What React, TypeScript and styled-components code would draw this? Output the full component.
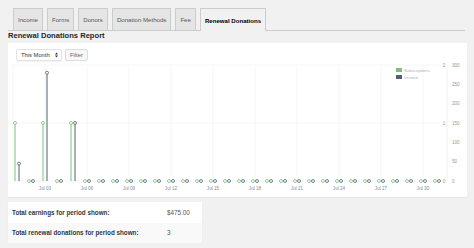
import React from 'react';
import styled, { createGlobalStyle } from 'styled-components';

const GlobalStyle = createGlobalStyle`
  body {
    margin: 0;
    background: #f1f1f1;
    font-family: "Liberation Sans", Arial, sans-serif;
    color: #32373c;
  }
`;

const Page = styled.div`
  padding: 8px 7px 0 8px;
`;

const TabNav = styled.nav`
  display: flex;
  align-items: flex-end;
  gap: 4px;
  height: 22px;
  padding-left: 5px;
  margin-right: 2px;
  border-bottom: 1px solid #ccc;
`;

const Tab = styled.a<{ $active?: boolean }>`
  display: flex;
  align-items: center;
  box-sizing: border-box;
  height: ${(p) => (p.$active ? '23px' : '22px')};
  margin-bottom: ${(p) => (p.$active ? '-1px' : '0')};
  padding: 0 4px;
  border: 1px solid #ccc;
  border-bottom: none;
  background: ${(p) => (p.$active ? '#f1f1f1' : '#e5e5e5')};
  color: ${(p) => (p.$active ? '#000' : '#555')};
  font-size: 6.1px;
  font-weight: ${(p) => (p.$active ? 700 : 400)};
  white-space: nowrap;
`;

const Heading = styled.h2`
  margin: 0;
  height: 12px;
  line-height: 9px;
  font-size: 7.6px;
  font-weight: 700;
  color: #23282d;
`;

const Panel = styled.div`
  background: #fff;
  height: 154px;
  box-shadow: 0 1px 1px rgba(0, 0, 0, 0.04);
`;

const Toolbar = styled.div`
  display: flex;
  gap: 3px;
  padding: 6px 0 0 8px;
  height: 12px;
`;

const Select = styled.div`
  display: flex;
  align-items: center;
  justify-content: space-between;
  box-sizing: border-box;
  width: 46px;
  height: 12px;
  padding: 0 3px 0 4px;
  border: 1px solid #e2e2e2;
  border-radius: 2px;
  font-size: 5.8px;
  color: #32373c;
  box-shadow: 0 1px 1px rgba(0, 0, 0, 0.05);
`;

const Button = styled.div`
  display: flex;
  align-items: center;
  box-sizing: border-box;
  height: 12px;
  padding: 0 4px;
  border: 1px solid #ddd;
  border-radius: 2px;
  background: #f7f7f7;
  font-size: 5.8px;
  color: #666;
`;

const Chart = styled.svg`
  display: block;
  font-family: "Liberation Sans", Arial, sans-serif;
`;

const Summary = styled.table`
  margin-top: 5px;
  width: 194px;
  border-collapse: collapse;
  background: #fff;
  box-shadow: 0 1px 1px rgba(0, 0, 0, 0.05);
  font-size: 6.3px;
`;

const Row = styled.tr<{ $alt?: boolean }>`
  height: 20.5px;
  background: ${(p) => (p.$alt ? '#f9f9f9' : '#fff')};
`;

const Label = styled.td`
  padding-left: 4px;
  font-weight: 700;
  color: #32373c;
`;

const Value = styled.td`
  width: 34px;
  color: #555;
`;

const GREEN = '#7cc07c';
const SLATE = '#4d6270';

const BASE = 120;
const TOP = 4;
const dayX = (d: number) => 9 + (d - 1) * 14;
const incomeY = (v: number) => BASE - (v * (BASE - TOP)) / 300;
const subsY = (v: number) => BASE - (v * (BASE - TOP)) / 2;

const income: Record<number, number> = { 1: 45, 3: 280, 5: 150 };
const subs: Record<number, number> = { 1: 1, 3: 1, 5: 1 };

const days = Array.from({ length: 31 }, (_, i) => i + 1);
const ticks = [3, 6, 9, 12, 15, 18, 21, 24, 27, 30];

const ReportChart = () => (
  <Chart width={459} height={135} viewBox="0 0 459 135">
    {[TOP, subsY(1), BASE].map((y) => (
      <line key={y} x1={5} x2={439} y1={y} y2={y} stroke="#f0f0f0" strokeWidth={0.6} />
    ))}
    {ticks.map((d) => (
      <line key={d} x1={dayX(d)} x2={dayX(d)} y1={TOP} y2={BASE} stroke="#f0f0f0" strokeWidth={0.6} />
    ))}
    <line x1={5} x2={5} y1={TOP} y2={BASE} stroke="#f0f0f0" strokeWidth={0.6} />
    <line x1={439} x2={439} y1={TOP} y2={BASE} stroke="#ececec" strokeWidth={0.8} />

    {days.map((d) => {
      const gx = dayX(d) - 2;
      const sx = dayX(d) + 2;
      const gy = subsY(subs[d] || 0);
      const sy = incomeY(income[d] || 0);
      return (
        <g key={d}>
          {subs[d] ? <line x1={gx} x2={gx} y1={BASE} y2={gy} stroke={GREEN} strokeWidth={1} /> : null}
          {income[d] ? <line x1={sx} x2={sx} y1={BASE} y2={sy} stroke={SLATE} strokeWidth={1} /> : null}
          <circle cx={gx} cy={gy} r={1.5} fill="#fff" stroke={GREEN} strokeWidth={0.8} />
          <circle cx={sx} cy={sy} r={1.5} fill="#fff" stroke={SLATE} strokeWidth={0.8} />
        </g>
      );
    })}

    {ticks.map((d) => (
      <text key={d} x={dayX(d)} y={129} fontSize={4.6} fill="#8a8a8a" textAnchor="middle">
        {`Jul ${String(d).padStart(2, '0')}`}
      </text>
    ))}

    {[2, 1, 0].map((v) => (
      <text key={v} x={436} y={subsY(v) + 1.7} fontSize={4.6} fill="#999" textAnchor="middle">
        {v}
      </text>
    ))}
    {[300, 250, 200, 150, 100, 50, 0].map((v) => (
      <text key={v} x={444} y={incomeY(v) + 1.7} fontSize={4.6} fill="#999">
        {v}
      </text>
    ))}

    <rect x={388} y={7} width={6} height={4} fill={GREEN} />
    <text x={396} y={10.6} fontSize={4.3} fill="#b0b0b0">Subscriptions</text>
    <rect x={388} y={14} width={6} height={4} fill={SLATE} />
    <text x={396} y={17.6} fontSize={4.3} fill="#b0b0b0">Income</text>
  </Chart>
);

const Arrows = () => (
  <svg width="3" height="6" viewBox="0 0 3 6">
    <path d="M1.5 0.5 L3 2.4 L0 2.4 Z M1.5 5.5 L3 3.6 L0 3.6 Z" fill="#32373c" />
  </svg>
);

export default function App() {
  const tabs = ['Income', 'Forms', 'Donors', 'Donation Methods', 'Fee', 'Renewal Donations'];
  return (
    <>
      <GlobalStyle />
      <Page>
        <TabNav>
          {tabs.map((t) => (
            <Tab key={t} $active={t === 'Renewal Donations'}>
              {t}
            </Tab>
          ))}
        </TabNav>
        <Heading>Renewal Donations Report</Heading>
        <Panel>
          <Toolbar>
            <Select>
              This Month <Arrows />
            </Select>
            <Button>Filter</Button>
          </Toolbar>
          <ReportChart />
        </Panel>
        <Summary>
          <tbody>
            <Row>
              <Label>Total earnings for period shown:</Label>
              <Value>$475.00</Value>
            </Row>
            <Row $alt>
              <Label>Total renewal donations for period shown:</Label>
              <Value>3</Value>
            </Row>
          </tbody>
        </Summary>
      </Page>
    </>
  );
}
